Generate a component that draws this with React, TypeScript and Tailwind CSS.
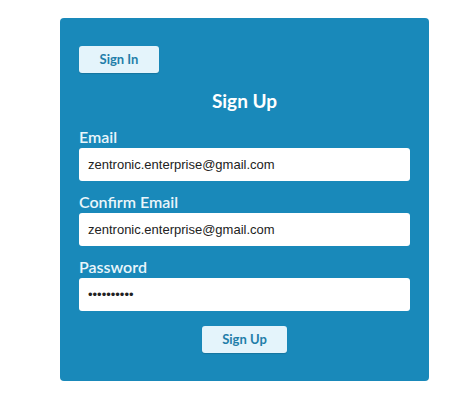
const labelCls = "block text-[16px] leading-[20px] font-semibold text-[#eaf6fb] mb-px";
const inputCls =
  "block w-full h-[33px] rounded-[3px] bg-white px-[9px] text-[13px] text-[#222] outline-none font-['Liberation_Sans',Arial,sans-serif]";
const btnCls =
  "h-[27px] rounded-[3px] bg-[#e4f4fb] text-[13px] font-bold text-[#1f7ea9] shadow-[0_1px_1px_rgba(0,0,0,0.15)]";

export default function App() {
  return (
    <div className="w-[474px] h-[414px] bg-white pt-[18px] pl-[60px] font-['Lato','Noto_Sans',sans-serif]">
      <div className="w-[369px] rounded-[4px] bg-[#1989ba] px-[19px] pt-[28px] pb-[28px]">
        <button className={btnCls + " w-[80px]"}>Sign In</button>

        <h2 className="mt-[16px] text-center text-[19px] leading-[24px] font-bold text-white">Sign Up</h2>

        <div className="mt-[14px]">
          <label className={labelCls}>Email</label>
          <input className={inputCls} type="text" defaultValue="zentronic.enterprise@gmail.com" />
        </div>

        <div className="mt-[11px]">
          <label className={labelCls}>Confirm Email</label>
          <input className={inputCls} type="text" defaultValue="zentronic.enterprise@gmail.com" />
        </div>

        <div className="mt-[11px]">
          <label className={labelCls}>Password</label>
          <input className={inputCls} type="password" defaultValue="abcdefghij" />
        </div>

        <div className="mt-[15px] flex justify-center">
          <button className={btnCls + " w-[85px]"}>Sign Up</button>
        </div>
      </div>
    </div>
  );
}
